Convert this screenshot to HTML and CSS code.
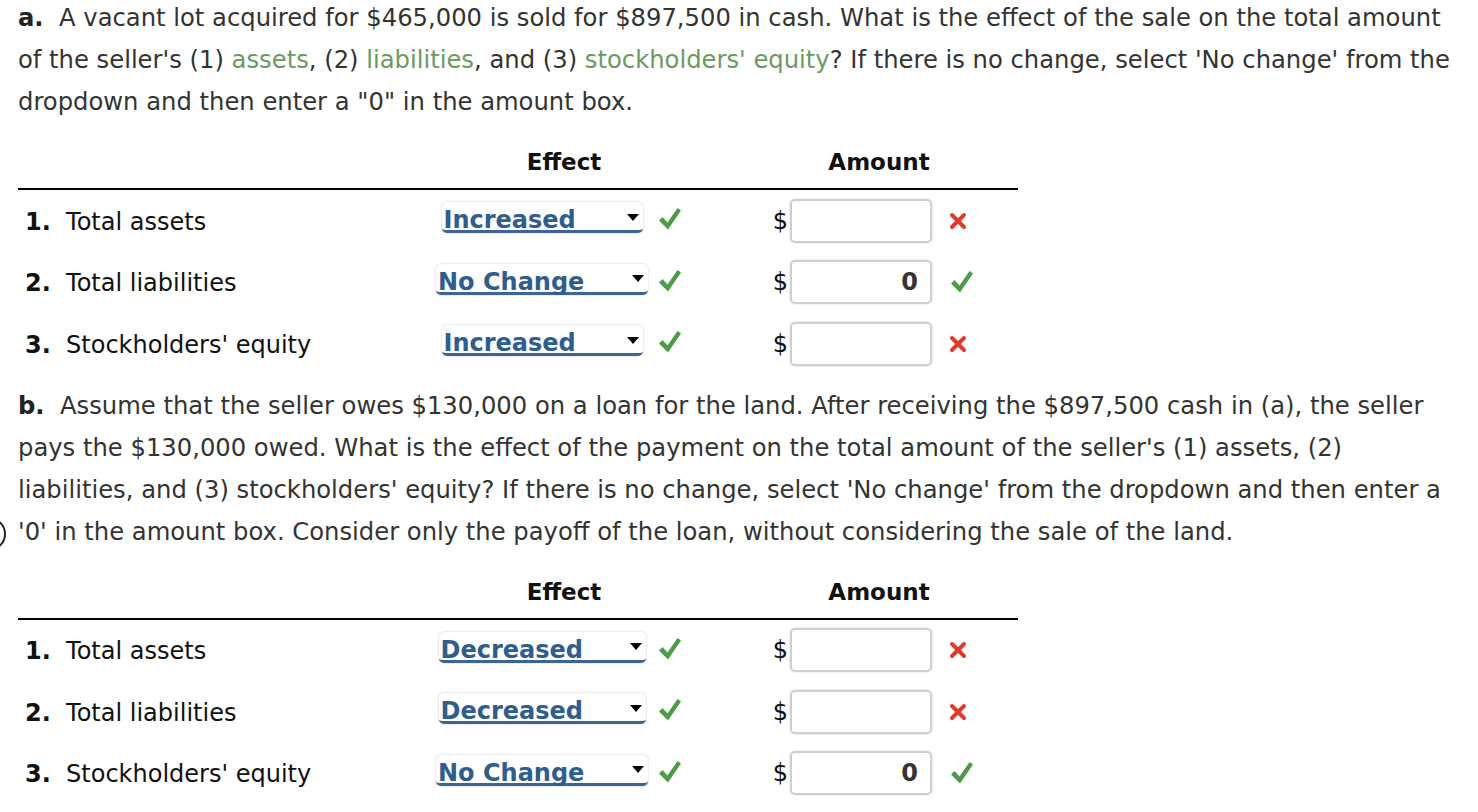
FILE: index.html
```html
<!DOCTYPE html>
<html lang="en">
<head>
    <meta charset="UTF-8">
    <title>Effect of the sale</title>
    <link rel="stylesheet" href="styles.css">
</head>
<body>
    <div class="page">
        <p class="question"><b>a.</b>&nbsp; A vacant lot acquired for $465,000 is sold for $897,500 in cash. What is the effect of the sale on the total amount of the seller's (1) <span class="term">assets</span>, (2) <span class="term">liabilities</span>, and (3) <span class="term">stockholders' equity</span>? If there is no change, select 'No change' from the dropdown and then enter a "0" in the amount box.</p>

        <div class="grid">
            <div class="head"></div>
            <div class="head effect-head">Effect</div>
            <div class="head amount-head">Amount</div>

            <div class="label"><b>1.</b>&nbsp; Total assets</div>
            <div class="effect"><span class="pick"><span class="select sel-a">Increased<i class="caret"></i></span></span><span class="ok"></span></div>
            <div class="amount"><span class="dollar">$</span><span class="box"></span><span class="bad"></span></div>

            <div class="label"><b>2.</b>&nbsp; Total liabilities</div>
            <div class="effect"><span class="pick"><span class="select sel-b">No Change<i class="caret"></i></span></span><span class="ok"></span></div>
            <div class="amount"><span class="dollar">$</span><span class="box">0</span><span class="ok"></span></div>

            <div class="label"><b>3.</b>&nbsp; Stockholders' equity</div>
            <div class="effect"><span class="pick"><span class="select sel-a">Increased<i class="caret"></i></span></span><span class="ok"></span></div>
            <div class="amount"><span class="dollar">$</span><span class="box"></span><span class="bad"></span></div>
        </div>

        <p class="question part-b"><b>b.</b>&nbsp; Assume that the seller owes $130,000 on a loan for the land. After receiving the $897,500 cash in (a), the seller pays the $130,000 owed. What is the effect of the payment on the total amount of the seller's (1) assets, (2) liabilities, and (3) stockholders' equity? If there is no change, select 'No change' from the dropdown and then enter a '0' in the amount box. Consider only the payoff of the loan, without considering the sale of the land.</p>

        <div class="grid">
            <div class="head"></div>
            <div class="head effect-head">Effect</div>
            <div class="head amount-head">Amount</div>

            <div class="label"><b>1.</b>&nbsp; Total assets</div>
            <div class="effect"><span class="pick"><span class="select sel-c">Decreased<i class="caret"></i></span></span><span class="ok"></span></div>
            <div class="amount"><span class="dollar">$</span><span class="box"></span><span class="bad"></span></div>

            <div class="label"><b>2.</b>&nbsp; Total liabilities</div>
            <div class="effect"><span class="pick"><span class="select sel-c">Decreased<i class="caret"></i></span></span><span class="ok"></span></div>
            <div class="amount"><span class="dollar">$</span><span class="box"></span><span class="bad"></span></div>

            <div class="label"><b>3.</b>&nbsp; Stockholders' equity</div>
            <div class="effect"><span class="pick"><span class="select sel-b">No Change<i class="caret"></i></span></span><span class="ok"></span></div>
            <div class="amount"><span class="dollar">$</span><span class="box">0</span><span class="ok"></span></div>
        </div>
    </div>
</body>
</html>
```

FILE: styles.css
```css
body {
    margin: 0;
    background: #fff;
    color: #222;
    font-family: "DejaVu Sans", Verdana, sans-serif;
    font-size: 24px;
    overflow: hidden;
}
.page {
    padding-left: 18px;
    margin-top: -3px;
}
.question {
    margin: 0;
    width: 1445px;
    font-size: 24.25px;
    line-height: 42px;
    color: #333;
}
.question b {
    color: #222;
}
.part-b {
    margin-top: 10px;
    position: relative;
}
.part-b::before {
    content: "";
    position: absolute;
    left: -42px;
    top: 133px;
    width: 26px;
    height: 28px;
    border: 2px solid #222;
    border-radius: 50%;
}
.term {
    color: #6a9a60;
}
.grid {
    display: grid;
    grid-template-columns: 412px 272px 316px;
    width: 1000px;
    margin-top: 18px;
}
.head {
    font-weight: bold;
    font-size: 23px;
    line-height: 42px;
    padding-bottom: 5px;
    border-bottom: 2px solid #000;
    color: #111;
}
.effect-head {
    text-align: center;
    padding-right: 4px;
}
.amount-head {
    text-align: center;
    padding-left: 38px;
}
.label, .effect, .amount {
    height: 61.5px;
    box-sizing: border-box;
    display: flex;
    align-items: center;
}
.label {
    padding-left: 7px;
    padding-top: 2px;
    color: #111;
}
.pick {
    width: 224px;
    display: flex;
    justify-content: center;
}
.select {
    display: inline-flex;
    align-items: flex-end;
    justify-content: space-between;
    height: 31px;
    line-height: 20px;
    padding: 0 4px 0 2px;
    margin-top: -6px;
    background: #fff;
    border-radius: 5px;
    box-shadow: 0 0 2px rgba(0, 0, 0, 0.25);
    border-bottom: 3px solid #3e6490;
    color: #2f5d8e;
    font-weight: bold;
    box-sizing: border-box;
}
.sel-a { width: 201px; }
.sel-b { width: 212px; }
.sel-c { width: 207px; }
.caret {
    align-self: center;
    width: 0;
    height: 0;
    margin-top: 2px;
    border-left: 6px solid transparent;
    border-right: 6px solid transparent;
    border-top: 7px solid #000;
}
.ok, .bad {
    display: inline-block;
    width: 24px;
    height: 24px;
    margin-left: 4px;
    margin-top: -3px;
    background-repeat: no-repeat;
}
.ok {
    background-image: url("data:image/svg+xml;utf8,<svg xmlns='http://www.w3.org/2000/svg' viewBox='0 0 24 24'><path d='M1 13.5 L4.5 10 L9.5 15.5 L19.5 1 L23 3.5 L10 22.5 Z' fill='%234e9a47'/></svg>");
}
.bad {
    width: 18px;
    height: 18px;
    margin-left: 17px;
    margin-top: 0;
    background-image: url("data:image/svg+xml;utf8,<svg xmlns='http://www.w3.org/2000/svg' viewBox='0 0 18 18'><path d='M3 3 L15 15 M15 3 L3 15' stroke='%23e03a2f' stroke-width='4' stroke-linecap='round'/></svg>");
}
.amount .ok {
    margin-left: 18px;
    margin-top: 0;
}
.dollar {
    width: 86px;
    text-align: right;
    color: #111;
}
.box {
    width: 142px;
    height: 44px;
    margin-left: 2px;
    box-sizing: border-box;
    border: 2px solid #cfcfcf;
    border-radius: 5px;
    box-shadow: 0 0 2px rgba(0, 0, 0, 0.2);
    display: flex;
    align-items: center;
    justify-content: flex-end;
    padding-right: 12px;
    font-weight: bold;
    color: #333;
}
```
